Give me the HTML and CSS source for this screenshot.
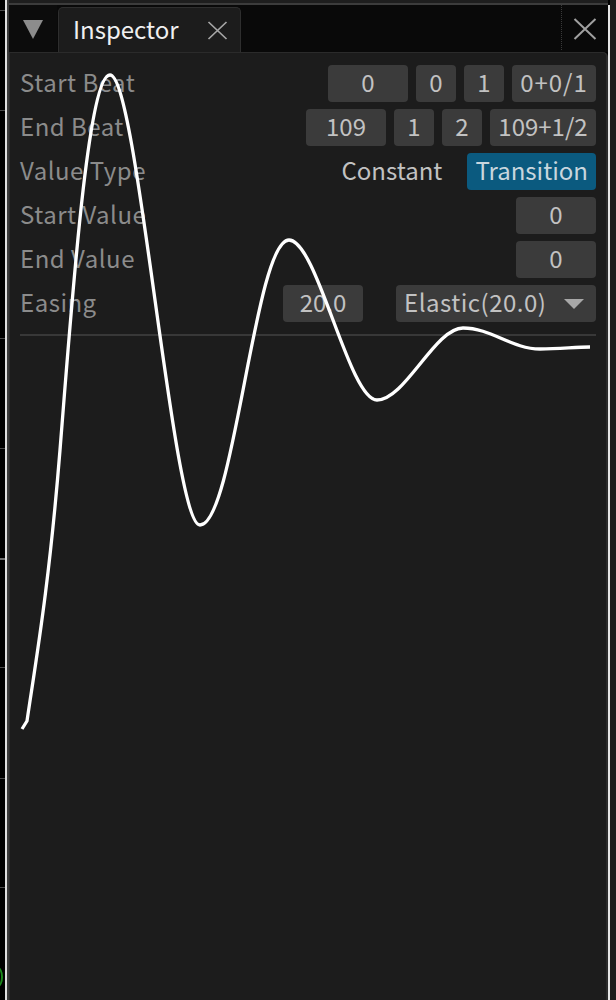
FILE: index.html
```html
<!DOCTYPE html>
<html>
<head>
<meta charset="utf-8">
<title>Inspector</title>
<link rel="stylesheet" href="styles.css">
</head>
<body>
<div class="screen">
  <div class="gutter">
    <div class="g s1"></div>
    <div class="g s2"></div>
    <div class="g s3"></div>
    <div class="g s4"></div>
    <div class="g s5 hi"></div>
    <div class="g s6"></div>
    <div class="g s7"></div>
    <div class="g s8"></div>
    <div class="g-rest"><span class="green-arc"></span></div>
  </div>
  <div class="split-l"></div>
  <div class="window">
    <div class="topstrip"></div>
    <div class="tabbar">
      <div class="collapse">
        <svg width="20" height="19" viewBox="0 0 20 19"><polygon points="0,0 20,0 10,19" fill="#8c8c8c"/></svg>
      </div>
      <div class="tab">
        <span class="tab-title">Inspector</span>
        <svg class="tab-x" width="21" height="19" viewBox="0 0 21 19"><path d="M1.5 1 L19.5 18 M19.5 1 L1.5 18" stroke="#a6a6a6" stroke-width="1.7" fill="none"/></svg>
      </div>
      <div class="tab-spacer"></div>
      <div class="dots"></div>
      <div class="close">
        <svg width="24" height="22" viewBox="0 0 24 22"><path d="M1.5 1 L22.5 21 M22.5 1 L1.5 21" stroke="#a0a0a0" stroke-width="2" fill="none"/></svg>
      </div>
    </div>
    <div class="panel">
      <div class="row">
        <span class="label">Start Beat</span>
        <div class="controls">
          <span class="box w80">0</span>
          <span class="box w40">0</span>
          <span class="box w40">1</span>
          <span class="box w84">0+0/1</span>
        </div>
      </div>
      <div class="row">
        <span class="label">End Beat</span>
        <div class="controls">
          <span class="box w80">109</span>
          <span class="box w40">1</span>
          <span class="box w40">2</span>
          <span class="box w106">109+1/2</span>
        </div>
      </div>
      <div class="row">
        <span class="label">Value Type</span>
        <div class="controls seg">
          <span class="opt">Constant</span>
          <span class="opt on">Transition</span>
        </div>
      </div>
      <div class="row">
        <span class="label">Start Value</span>
        <div class="controls">
          <span class="box w80">0</span>
        </div>
      </div>
      <div class="row">
        <span class="label">End Value</span>
        <div class="controls">
          <span class="box w80">0</span>
        </div>
      </div>
      <div class="row">
        <span class="label">Easing</span>
        <div class="controls">
          <span class="box w80">20.0</span>
          <span class="box dropdown">
            <span class="dd-text">Elastic(20.0)</span>
            <svg width="20" height="10" viewBox="0 0 20 10"><polygon points="0,0 20,0 10,10" fill="#a8a8a8"/></svg>
          </span>
        </div>
      </div>
      <div class="sep"></div>
    </div>
  </div>
  <div class="split-r"></div>
  <div class="rgutter"></div>
  <svg class="curve" width="616" height="1000" viewBox="0 0 616 1000">
    <path d="M22,729 L27,721 C36,660 49,587 60,450 C72,300 88,75 110,75 C137.5,75 172.5,525 200,525 C234,525 255,240 289,240 C317,240 349,400 377,400 C405,400 435,328 463,328 C491,328 512,349 540,349 C560,349 575,347 590,347" fill="none" stroke="#ffffff" stroke-width="3.3" stroke-linejoin="round"/>
  </svg>
</div>
</body>
</html>
```

FILE: styles.css
```css
* { box-sizing: border-box; }
html, body { margin: 0; padding: 0; background: #000; }
body {
  width: 616px;
  height: 1000px;
  overflow: hidden;
  font-family: "Noto Sans CJK SC", "Noto Sans", sans-serif;
}
.screen {
  position: relative;
  display: flex;
  width: 616px;
  height: 1000px;
}
/* left background gutter */
.gutter {
  width: 5px;
  flex: none;
  display: flex;
  flex-direction: column;
  background: #000;
  overflow: hidden;
}
.g { flex: none; border-bottom: 1px solid #4a4a4a; }
.g.hi { border-bottom: 2px solid #707070; }
.s1 { height: 11px; }
.s2 { height: 100px; }
.s3 { height: 228px; }
.s4 { height: 110px; }
.s5 { height: 111px; }
.s6 { height: 108px; }
.s7 { height: 111px; }
.s8 { height: 109px; }
.g-rest { flex: 1; padding-top: 79px; }
.green-arc {
  display: block;
  width: 10px;
  height: 20px;
  margin-left: -7px;
  border: 2px solid #1c8a1c;
  border-radius: 50%;
}
.split-l { width: 2px; flex: none; background: #dedede; }
.split-r { width: 2px; flex: none; background: #e6e6e6; margin-top: 5px; }
.rgutter { width: 6px; flex: none; background: #1d1d1d; }

.window {
  width: 601px;
  flex: none;
  display: flex;
  flex-direction: column;
  border-left: 2px solid #3a3a3a;
}
.topstrip {
  height: 5px;
  flex: none;
  background: #1e1e1e;
  border-bottom: 2px solid #3c3c3c;
}
.tabbar {
  height: 47px;
  flex: none;
  display: flex;
  background: #090909;
}
.collapse {
  width: 48px;
  flex: none;
  display: flex;
  align-items: center;
  justify-content: center;
  background: #0c0c0c;
}
.collapse svg { display: block; margin-top: 1px; }
.tab {
  width: 183px;
  margin-left: 1px;
  margin-top: 2px;
  flex: none;
  display: flex;
  align-items: center;
  justify-content: space-between;
  padding: 0 12px 0 14px;
  background: #1c1c1c;
  border: 1px solid #2e2e2e;
  border-bottom: none;
  border-radius: 5px 5px 0 0;
}
.tab-title {
  color: #f0f0f0;
  font-size: 24px;
  padding-bottom: 4px;
}
.tab-x { display: block; }
.tab-spacer { flex: 1; }
.dots {
  width: 1px;
  flex: none;
  margin-bottom: 2px;
  border-left: 1px dotted #3a3a3a;
}
.close {
  width: 46px;
  flex: none;
  display: flex;
  align-items: center;
  justify-content: center;
}
.close svg { display: block; }

.panel {
  flex: 1;
  display: flex;
  flex-direction: column;
  gap: 7px;
  background: #1c1c1c;
  border-left: 1px solid #2b2b2b;
  border-right: 2px solid #2b2b2b;
  border-top: 1px solid #2b2b2b;
  border-radius: 0 5px 0 0;
  padding: 12px 10px 0 10px;
}
.row {
  height: 37px;
  flex: none;
  display: flex;
  align-items: center;
}
.label {
  flex: 1;
  color: #8b8b8b;
  font-size: 24px;
  letter-spacing: 0.5px;
  white-space: nowrap;
  padding-bottom: 4px;
}
.controls {
  display: flex;
  gap: 8px;
  height: 37px;
}
.box {
  height: 37px;
  display: flex;
  align-items: center;
  justify-content: center;
  background: #3b3b3b;
  border-radius: 4px;
  color: #c2c2c2;
  font-size: 24px;
  padding-bottom: 4px;
  white-space: nowrap;
}
.w80 { width: 80px; }
.w40 { width: 40px; }
.w84 { width: 84px; letter-spacing: 1px; }
.w106 { width: 106px; }
.seg { gap: 17px; }
.opt {
  height: 37px;
  display: flex;
  align-items: center;
  padding: 0 8px 4px 8px;
  color: #c2c2c2;
  font-size: 24px;
  border-radius: 4px;
}
.opt.on {
  background: #0b5a7f;
  color: #c8d6de;
}
.dropdown {
  width: 200px;
  margin-left: 25px;
  justify-content: space-between;
  padding: 0 12px 4px 8px;
}
.dd-text { letter-spacing: 0.5px; }
.dropdown svg { display: block; margin-top: 4px; }
.sep {
  height: 2px;
  flex: none;
  margin-top: 5px;
  background: #383838;
}
.curve {
  position: absolute;
  left: 0;
  top: 0;
  pointer-events: none;
}
```
